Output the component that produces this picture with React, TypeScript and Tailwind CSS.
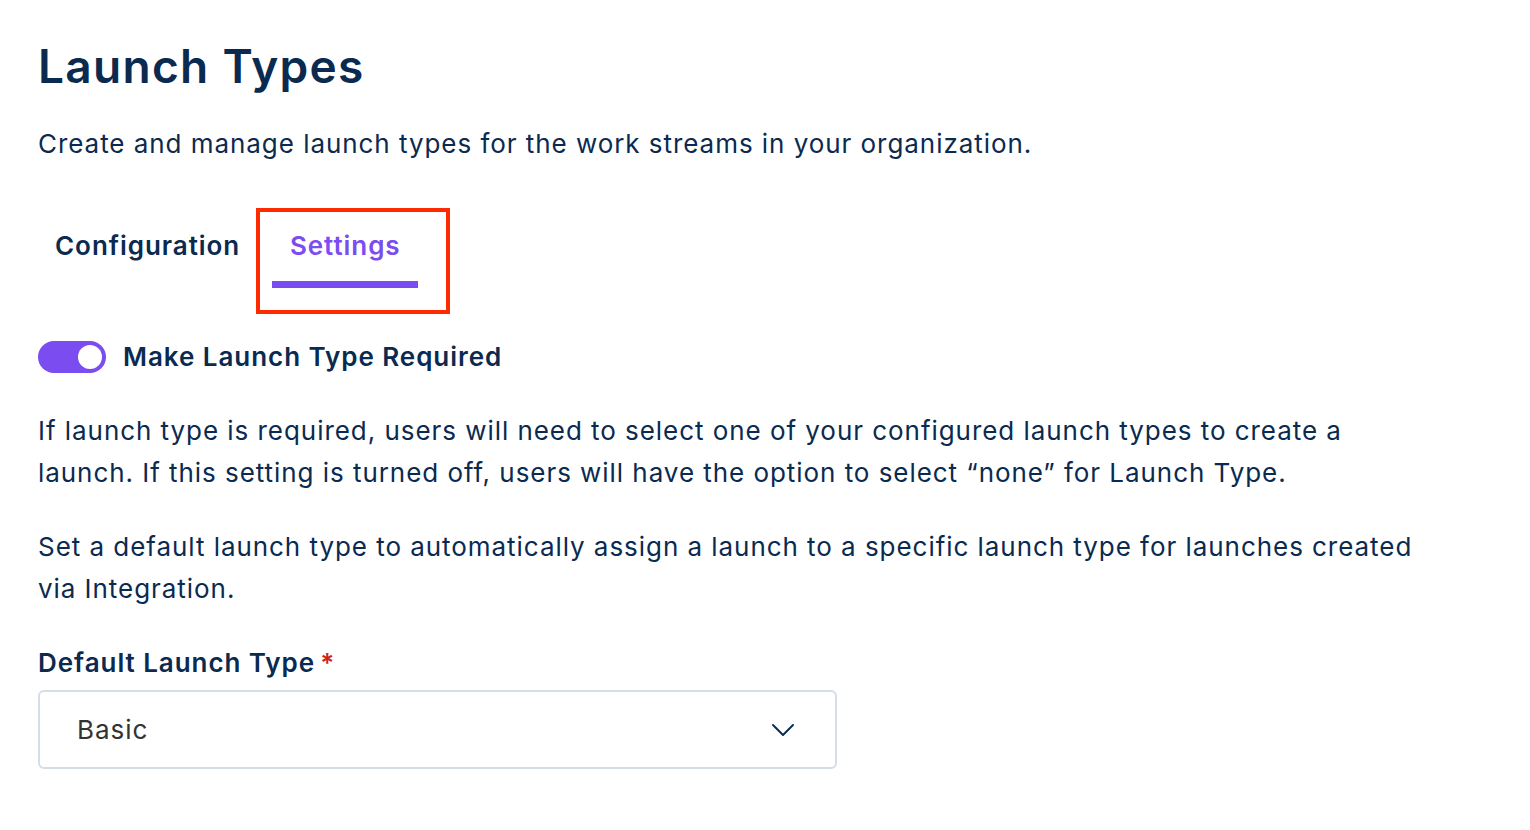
import React from "react";

function Toggle() {
  return (
    <div className="relative h-[32px] w-[68px] rounded-full bg-[#7b4cf0] shrink-0">
      <div className="absolute right-[4px] top-[4px] h-[24px] w-[24px] rounded-full bg-white" />
    </div>
  );
}

function Chevron() {
  return (
    <svg width="22" height="12" viewBox="0 0 22 12" fill="none" stroke="#0b2a4f" strokeWidth="1.9" strokeLinecap="round" strokeLinejoin="round">
      <path d="M1 1l10 10 10-10" />
    </svg>
  );
}

export default function App() {
  return (
    <div
      className="min-h-[830px] w-full bg-white pl-[38px] pt-[36px] text-[#0b2a4f] tracking-[0.95px]"
      style={{ fontFamily: "Inter, 'Noto Sans', sans-serif" }}
    >
      <h1 className="text-[46px] font-semibold leading-[60px] tracking-[1.3px]">Launch Types</h1>
      <p className="mt-[30px] text-[26px] leading-[36px]">
        Create and manage launch types for the work streams in your organization.
      </p>

      <div className="mt-[46px] flex items-stretch">
        <div className="flex h-[106px] items-start pl-[17px] pr-[16px] pt-[20px]">
          <span className="text-[26px] font-semibold leading-[36px]">Configuration</span>
        </div>
        <div className="h-[106px] w-[194px] border-[4px] border-[#ff2a00] pl-[12px] pt-[16px]">
          <div className="flex w-[146px] flex-col items-center">
            <span className="text-[26px] font-semibold leading-[36px] text-[#7b4cf0]">Settings</span>
            <div className="mt-[17px] h-[7px] w-[146px] bg-[#7b4cf0]" />
          </div>
        </div>
      </div>

      <div className="mt-[25px] flex items-center gap-[17px]">
        <Toggle />
        <span className="text-[26px] font-semibold leading-[36px]">Make Launch Type Required</span>
      </div>

      <div className="mt-[35px] max-w-[1390px] text-[26px] leading-[42px]">
        <p>
          If launch type is required, users will need to select one of your configured launch types to create a
          launch. If this setting is turned off, users will have the option to select “none” for Launch Type.
        </p>
        <p className="mt-[32px]">
          Set a default launch type to automatically assign a launch to a specific launch type for launches created
          via Integration.
        </p>
      </div>

      <div className="mt-[35px] flex items-center text-[26px] font-semibold leading-[36px]">
        Default Launch Type
        <span className="ml-[5px] text-[#d21f1f]">*</span>
      </div>

      <div className="mt-[9px] flex h-[79px] w-[799px] items-center justify-between rounded-[6px] border-[2px] border-[#d6dde8] pl-[37px] pr-[41px]">
        <span className="text-[26px] leading-[36px] text-[#333333]">Basic</span>
        <Chevron />
      </div>
    </div>
  );
}
